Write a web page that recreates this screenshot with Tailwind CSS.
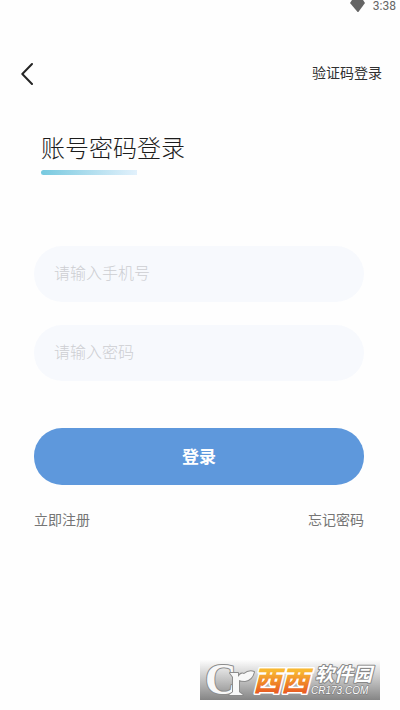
<!DOCTYPE html>
<html lang="zh-CN">
<head>
<meta charset="utf-8">
<meta name="viewport" content="width=device-width, initial-scale=1">
<title>账号密码登录</title>
<script src="https://cdn.jsdelivr.net/npm/@tailwindcss/browser@4"></script>
</head>
<body class="min-h-screen bg-[#fefefe] flex flex-col text-[#303030] font-['Roboto','Noto_Sans_CJK_SC',sans-serif]">
  <div class="h-[55px] shrink-0 flex items-start justify-end gap-2 pr-1 text-xs leading-3 text-[#666]">
    <svg class="w-4 h-3" viewBox="0 0 16 12" fill="#646464" aria-hidden="true"><path d="M3 0H14L16 3 9 12.500 1 3Z"/></svg>
    <span>3:38</span>
  </div>
  <header class="h-9 shrink-0 flex items-center justify-between pl-5 pr-[18px]">
    <button type="button" aria-label="返回" class="w-4 h-6">
      <svg class="w-4 h-6" viewBox="0 0 16 24" fill="none" stroke="#252525" stroke-width="2" stroke-linecap="round" stroke-linejoin="round"><path d="M12 3 2.300 13 12 23"/></svg>
    </button>
    <a href="#code" class="text-sm leading-5">验证码登录</a>
  </header>
  <main class="pl-[34px] pr-9">
    <div class="mt-[38px] ml-[7px]">
      <h1 class="text-2xl leading-10 font-light text-[#1c1c1c]">账号密码登录</h1>
      <div class="mt-px w-24 h-[5px] rounded-l-full bg-linear-to-r from-[#76c9df] to-[#e2f1fc]"></div>
    </div>
    <form class="mt-[71px]" onsubmit="return false">
      <input type="tel" aria-label="手机号" placeholder="请输入手机号" class="block w-full h-14 rounded-[28px] bg-[#f7f9fd] px-5 pb-0.5 text-base font-light placeholder:text-[#cdced2] outline-none">
      <input type="password" aria-label="密码" placeholder="请输入密码" class="mt-[23px] block w-full h-14 rounded-[28px] bg-[#f7f9fd] px-5 pb-0.5 text-base font-light placeholder:text-[#cdced2] outline-none">
      <button type="submit" class="mt-[47px] block w-full h-[57px] rounded-[28px] bg-[#5e98dc] pt-0.5 text-white text-[17px] font-bold">登录</button>
    </form>
    <nav class="mt-[25px] flex justify-between text-sm leading-5 text-[#757575]">
      <a href="#register">立即注册</a>
      <a href="#forgot">忘记密码</a>
    </nav>
  </main>
  <footer class="mt-auto flex justify-end pr-5 pb-[10px]">
    <svg class="w-[180px] h-10" viewBox="0 0 180 40" role="img" aria-label="西西软件园 CR173.COM">
      <defs>
        <linearGradient id="bg" x2="0" y2="1"><stop stop-color="#fdfdfd"/><stop offset=".5" stop-color="#c2c2c2"/><stop offset="1" stop-color="#858585"/></linearGradient>
        <linearGradient id="or" x2="0" y2="1"><stop offset=".3" stop-color="#f8b832"/><stop offset=".85" stop-color="#e85a22"/></linearGradient>
      </defs>
      <path d="M0 0H180V40H0Z" fill="url(#bg)"/>
      <g fill="#f8f8f8" stroke-linejoin="round" paint-order="stroke">
        <text x="5" y="34" font-family="Liberation Serif, serif" font-size="44" font-weight="700" stroke="#8c8c8c" stroke-width="2">C</text>
        <path d="M30 13H38V17Q41 12 44 14Q49 10 54 12Q52 20 45 21Q41 21 39 20V32L43 35H29L33 32V17Z" stroke="#8c8c8c" stroke-width="2"/>
      </g>
      <g font-family="Noto Sans CJK SC, sans-serif" font-weight="900" font-style="italic" stroke-linejoin="round" paint-order="stroke">
        <text x="53" y="31" font-size="28" fill="url(#or)" stroke="#fff" stroke-width="3">西西</text>
        <text x="115" y="21" font-size="19" font-weight="700" fill="#fff" stroke="#888" stroke-width="2">软件园</text>
      </g>
      <text x="111" y="34" font-family="Liberation Sans, sans-serif" font-size="10" font-style="italic" fill="#fff" stroke="#777" stroke-width="1" paint-order="stroke">CR173.COM</text>
    </svg>
  </footer>
</body>
</html>
